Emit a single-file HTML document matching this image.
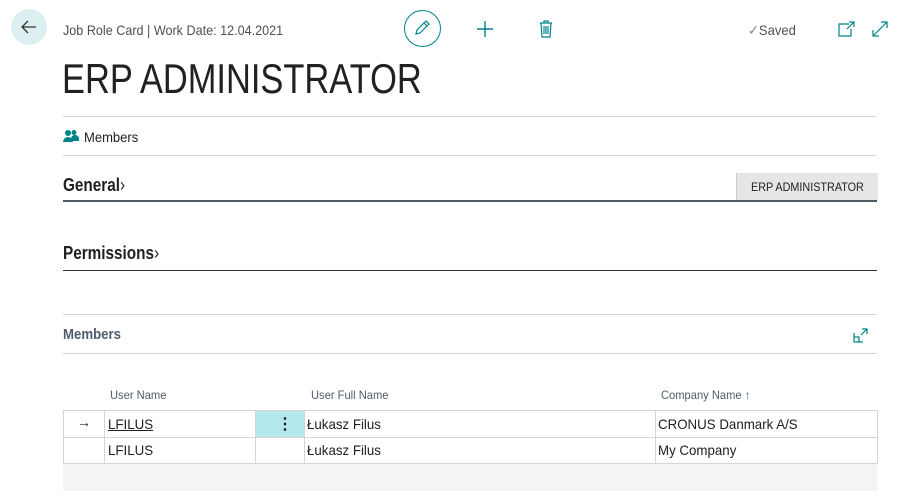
<!DOCTYPE html>
<html><head><meta charset="utf-8"><style>
body{margin:0;width:921px;height:491px;background:#fff;font-family:"Liberation Sans",sans-serif;color:#212121;position:relative;overflow:hidden}
.a{position:absolute}
.t{white-space:nowrap;transform-origin:left center}
.r{transform:scaleX(.95)}
.hl{position:absolute;left:63px;width:814px;height:1px;background:#d5d5d5}
.c{position:absolute;top:0;height:100%;border-left:1px solid #d5d5d5}
</style></head><body>
<div class="a" style="left:11px;top:9px;width:36px;height:36px;border-radius:50%;background:#dcf0f2"></div>
<svg class="a" style="left:19px;top:18px" width="20" height="18"><path d="M17 9H3M9 3L3 9l6 6" stroke="#333" stroke-width="1.3" fill="none"/></svg>
<div class="a t" style="left:63px;top:22px;font-size:14px;color:#505050;transform:scaleX(.9)">Job Role Card | Work Date: 12.04.2021</div>
<div class="a" style="left:404px;top:10px;width:35px;height:35px;border:1.3px solid #00838a;border-radius:50%"></div>
<svg class="a" style="left:412px;top:18px" width="20" height="20"><path d="M4 16l1-4 9-9 3 3-9 9z M12 5l3 3" stroke="#00838a" stroke-width="1.2" fill="none"/></svg>
<svg class="a" style="left:476px;top:20px" width="18" height="18"><path d="M9 1v16M1 9h16" stroke="#00838a" stroke-width="1.4"/></svg>
<svg class="a" style="left:538px;top:20px" width="16" height="18"><path d="M2 3h12M6 3V1h4v2M3 3l1 14h8l1-14M6 6v8M8 6v8M10 6v8" stroke="#00838a" stroke-width="1.2" fill="none"/></svg>
<div class="a t" style="left:748px;top:22px;font-size:14px;color:#505050;transform:scaleX(.93)"><span style="color:#888">✓</span>Saved</div>
<svg class="a" style="left:838px;top:21px" width="18" height="16"><path d="M11 3H1v12h12V8M11 1h5v5M16 1l-7 7" stroke="#00838a" stroke-width="1.2" fill="none"/></svg>
<svg class="a" style="left:871px;top:20px" width="18" height="18"><path d="M2 16L16 2M10 2h6v6M2 10v6h6" stroke="#00838a" stroke-width="1.2" fill="none"/></svg>
<div class="a t" style="left:62px;top:55px;font-size:42px;color:#212121;transform:scaleX(.82)">ERP ADMINISTRATOR</div>
<div class="hl" style="top:116px"></div>
<svg class="a" style="left:63px;top:129px" width="16" height="14"><circle cx="5" cy="4" r="3" fill="#00838a"/><circle cx="11" cy="3.5" r="2.5" fill="#00838a"/><path d="M0 13a5 5 0 0 1 10 0zM8 9a4 4 0 0 1 8 2v1H10z" fill="#00838a"/></svg>
<div class="a t" style="left:84px;top:129px;font-size:14px;transform:scaleX(.93)">Members</div>
<div class="hl" style="top:155px"></div>
<div class="a t" style="left:63px;top:175px;font-size:18px;font-weight:bold;color:#212121;transform:scaleX(.85)">General<span style="font-weight:normal">›</span></div>
<div class="a" style="left:736px;top:173px;width:141px;height:27px;background:#e6e6e6;border-left:1px solid #ccc"></div>
<div class="a t" style="left:751px;top:180px;font-size:12px;color:#212121;transform:scaleX(.9)">ERP ADMINISTRATOR</div>
<div class="a" style="left:63px;top:200px;width:814px;height:2px;background:#505a64"></div>
<div class="a t" style="left:63px;top:243px;font-size:18px;font-weight:bold;transform:scaleX(.85)">Permissions<span style="font-weight:normal">›</span></div>
<div class="a" style="left:63px;top:270px;width:814px;height:1px;background:#333"></div>
<div class="hl" style="top:314px"></div>
<div class="a t" style="left:63px;top:326px;font-size:15px;font-weight:bold;color:#505c6d;transform:scaleX(.88)">Members</div>
<svg class="a" style="left:853px;top:327px" width="16" height="16"><path d="M1 6v9h9M1 10h5v5M9 2h5v5M14 2l-6 6" stroke="#00838a" stroke-width="1.2" fill="none"/></svg>
<div class="hl" style="top:353px"></div>
<div class="a t" style="left:110px;top:388px;font-size:12px;color:#505c6d;transform:scaleX(.93)">User Name</div>
<div class="a t" style="left:311px;top:388px;font-size:12px;color:#505c6d;transform:scaleX(.93)">User Full Name</div>
<div class="a t" style="left:661px;top:388px;font-size:12px;color:#505c6d;transform:scaleX(.93)">Company Name ↑</div>
<div class="a" style="left:63px;top:410px;width:813px;height:52px;border:1px solid #d5d5d5">
 <div class="a" style="left:192px;top:0;width:48px;height:26px;background:#b3e8ec"></div>
 <div class="a" style="left:0;top:26px;width:100%;border-top:1px solid #d5d5d5"></div>
 <div class="c" style="left:40px"></div><div class="c" style="left:191px"></div><div class="c" style="left:240px"></div><div class="c" style="left:591px"></div>
</div>
<div class="a" style="left:77px;top:414px;font-size:14px">→</div>
<div class="a t r" style="left:108px;top:416px;font-size:14px;text-decoration:underline">LFILUS</div>
<div class="a" style="left:277px;top:414px;font-size:16px;font-weight:bold">⋮</div>
<div class="a t r" style="left:307px;top:416px;font-size:14px">Łukasz Filus</div>
<div class="a t r" style="left:658px;top:416px;font-size:14px">CRONUS Danmark A/S</div>
<div class="a t r" style="left:108px;top:442px;font-size:14px">LFILUS</div>
<div class="a t r" style="left:307px;top:442px;font-size:14px">Łukasz Filus</div>
<div class="a t r" style="left:658px;top:442px;font-size:14px">My Company</div>
<div class="a" style="left:63px;top:464px;width:814px;height:27px;background:#f3f4f6"></div>
</body></html>
